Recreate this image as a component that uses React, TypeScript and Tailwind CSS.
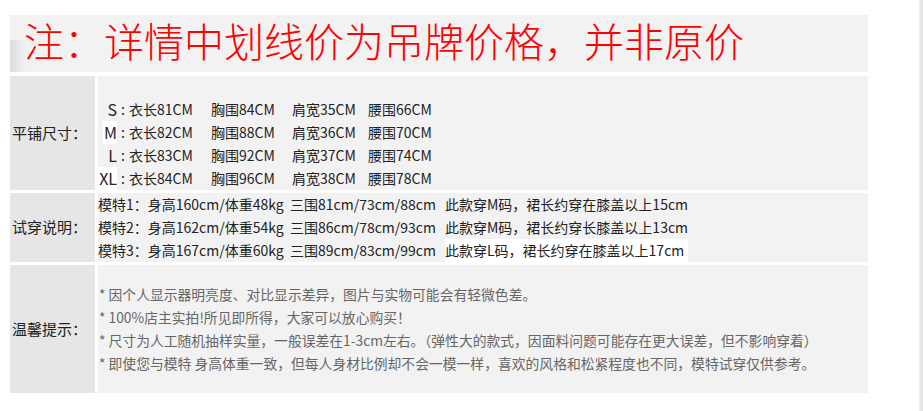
import React from "react";

const font = { fontFamily: '"Noto Sans CJK SC", "Noto Sans", sans-serif' };

const sizes = [
  { s: "S", a: "衣长81CM", b: "胸围84CM", c: "肩宽35CM", d: "腰围66CM", hl: false },
  { s: "M", a: "衣长82CM", b: "胸围88CM", c: "肩宽36CM", d: "腰围70CM", hl: true },
  { s: "L", a: "衣长83CM", b: "胸围92CM", c: "肩宽37CM", d: "腰围74CM", hl: false },
  { s: "XL", a: "衣长84CM", b: "胸围96CM", c: "肩宽38CM", d: "腰围78CM", hl: true },
];

const models = [
  { a: "模特1：身高160cm/体重48kg", b: "三围81cm/73cm/88cm", c: "此款穿M码，裙长约穿在膝盖以上15cm" },
  { a: "模特2：身高162cm/体重54kg", b: "三围86cm/78cm/93cm", c: "此款穿M码，裙长约穿长膝盖以上13cm" },
  { a: "模特3：身高167cm/体重60kg", b: "三围89cm/83cm/99cm", c: "此款穿L码，裙长约穿在膝盖以上17cm" },
];

const tips = [
  "因个人显示器明亮度、对比显示差异，图片与实物可能会有轻微色差。",
  "100%店主实拍!所见即所得，大家可以放心购买！",
  "尺寸为人工随机抽样实量，一般误差在1-3cm左右。（弹性大的款式，因面料问题可能存在更大误差，但不影响穿着）",
  "即使您与模特 身高体重一致，但每人身材比例却不会一模一样，喜欢的风格和松紧程度也不同，模特试穿仅供参考。",
];

function Label({ children }: { children: React.ReactNode }) {
  return (
    <div className="w-[85px] shrink-0 bg-[#e6e6e6] flex items-center pl-[2px] text-[15px] text-[#222]">
      {children}
    </div>
  );
}

export default function App() {
  return (
    <div className="w-[923px] h-[411px] bg-white flex overflow-hidden" style={font}>
      <div className="w-[919px] pl-[10px] pt-[15px]">
        <div className="w-[858px] h-[57px] bg-[#f2f2f2] relative">
          <div className="absolute left-0 top-[25px] w-[16px] h-[32px] bg-gradient-to-r from-[#dcdcdc] to-[#f2f2f2]" />
          <div className="relative pl-[14px] text-[40px] font-light leading-[50px] text-[#ff0000] whitespace-nowrap">
            注：详情中划线价为吊牌价格，并非原价
          </div>
        </div>

        <div className="mt-[4px] flex flex-col gap-[3px] w-[858px]">
          <div className="flex h-[114px] gap-[3px]">
            <Label>平铺尺寸：</Label>
            <div className="flex-1 bg-[#f2f2f2] flex flex-col justify-end text-[14px] leading-[23px] text-[#222]">
              {sizes.map((r) => (
                <div key={r.s} className="flex whitespace-nowrap">
                  <span className="w-[19px] flex justify-end">
                    <span className={`text-[16px] pl-[1px] ${r.hl ? "bg-white" : ""}`}>{r.s}</span>
                  </span>
                  <span className="w-[12px] text-center">:</span>
                  <span className="w-[82px]">{r.a}</span>
                  <span className="w-[81px]">{r.b}</span>
                  <span className="w-[76px]">{r.c}</span>
                  <span>{r.d}</span>
                </div>
              ))}
            </div>
          </div>

          <div className="flex h-[69px] gap-[3px]">
            <Label>试穿说明：</Label>
            <div className="flex-1 bg-[#f2f2f2] flex flex-col justify-center text-[14px] leading-[23px] text-[#222]">
              {models.map((m, i) => (
                <div key={i} className="flex whitespace-nowrap">
                  <span className="w-[192px]">{m.a}</span>
                  <span className="w-[155px]">{m.b}</span>
                  <span className={i === 2 ? "bg-white pr-[4px]" : ""}>{m.c}</span>
                </div>
              ))}
            </div>
          </div>

          <div className="flex h-[128px] gap-[3px]">
            <Label>温馨提示：</Label>
            <div className="flex-1 bg-[#f2f2f2] flex flex-col justify-center text-[13.8px] leading-[23px] text-[#666]">
              {tips.map((t, i) => (
                <div key={i} className="whitespace-nowrap pl-[1px]">
                  * {t}
                </div>
              ))}
            </div>
          </div>
        </div>
      </div>
      <div className="w-[4px] h-full bg-gradient-to-r from-[#f0f0f0] to-[#e2e2e2]" />
    </div>
  );
}
